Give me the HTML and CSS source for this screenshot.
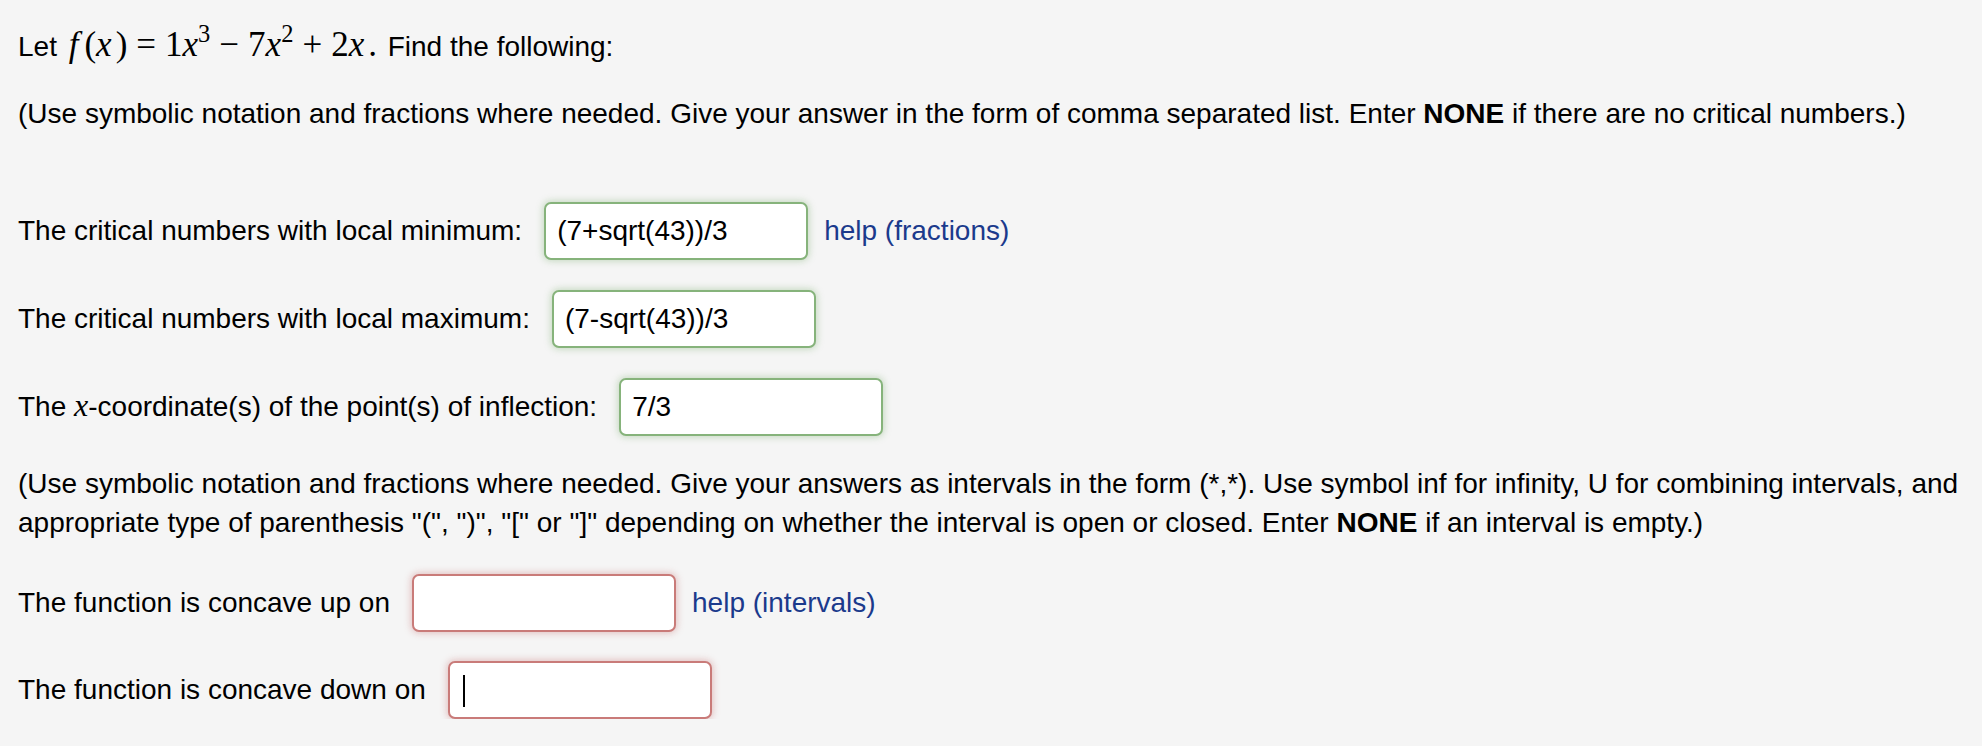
FILE: index.html
```html
<!DOCTYPE html>
<html lang="en">
<head>
    <meta charset="UTF-8">
    <title>Problem</title>
    <link rel="stylesheet" href="styles.css">
</head>
<body>
    <div class="problem">
        <p class="line">Let <span class="math"><i class="fn">f</i>(<i>x</i>)<span class="op">=</span>1<i>x</i><sup>3</sup><span class="op">&minus;</span>7<i>x</i><sup>2</sup><span class="op">+</span>2<i>x</i>.</span> Find the following:</p>
        <p class="line note">(Use symbolic notation and fractions where needed. Give your answer in the form of comma separated list. Enter <b>NONE</b> if there are no critical numbers.)</p>

        <div class="answers first">
            <div class="row">
                <span>The critical numbers with local minimum:</span>
                <input type="text" class="ans correct" value="(7+sqrt(43))/3">
                <a class="help" href="#">help (fractions)</a>
            </div>
            <div class="row">
                <span>The critical numbers with local maximum:</span>
                <input type="text" class="ans correct" value="(7-sqrt(43))/3">
            </div>
            <div class="row">
                <span>The <span class="mvar">x</span>-coordinate(s) of the point(s) of inflection:</span>
                <input type="text" class="ans correct" value="7/3">
            </div>
        </div>

        <p class="line note second">(Use symbolic notation and fractions where needed. Give your answers as intervals in the form (*,*). Use symbol inf for infinity, U for combining intervals, and<br>appropriate type of parenthesis "(", ")", "[" or "]" depending on whether the interval is open or closed. Enter <b>NONE</b> if an interval is empty.)</p>

        <div class="answers last">
            <div class="row">
                <span>The function is concave up on</span>
                <input type="text" class="ans wrong" value="">
                <a class="help" href="#">help (intervals)</a>
            </div>
            <div class="row">
                <span>The function is concave down on</span>
                <span class="field">
                    <input type="text" class="ans wrong" value="">
                    <span class="caret"></span>
                </span>
            </div>
        </div>
    </div>
</body>
</html>
```

FILE: styles.css
```css
body{
    margin:0px;
    padding:0px;
    background-color:#f5f5f5;
    color:#000;
    font-family: "Liberation Sans", Arial, sans-serif;
    font-size: 28px;
}
.problem{
    padding: 27px 0 0 18px;
    border-left: 3px solid #fafafa;
    margin-left: -3px;
}
.line{
    margin: 0;
    line-height: 39px;
}
.note{
    margin-top: 28px;
}
.note.second{
    margin-top: 28px;
    white-space: nowrap;
}
.math{
    font-family: "Liberation Serif", "Times New Roman", serif;
    font-size: 35px;
    line-height: 0;
    margin: 0 3px 0 4px;
}
.math i{
    padding-right: 4px;
}
.math .fn{
    padding-right: 6px;
}
.math sup{
    font-size: 70%;
    line-height: 0;
    vertical-align: 0.56em;
    margin-left: -4px;
}
.op{
    margin: 0 9px;
}
.mvar{
    font-family: "Liberation Serif", "Times New Roman", serif;
    font-style: italic;
    font-size: 32px;
    line-height: 0;
}
.answers{
    display: flex;
    flex-direction: column;
    gap: 30px;
}
.answers.first{
    margin-top: 69px;
}
.answers.last{
    margin-top: 32px;
    gap: 29px;
}
.row{
    display: flex;
    align-items: center;
    height: 58px;
}
.ans{
    box-sizing: border-box;
    width: 264px;
    height: 58px;
    margin-left: 22px;
    padding: 0 11px;
    font-family: "Liberation Sans", Arial, sans-serif;
    font-size: 28px;
    color: #000;
    background-color: #fff;
    border-radius: 7px;
    outline: none;
}
.correct{
    border: 2px solid #86b37b;
    box-shadow: 0 0 7px 1px rgba(134, 179, 123, 0.45);
}
.wrong{
    border: 2px solid #c97b79;
    box-shadow: 0 0 7px 1px rgba(201, 123, 121, 0.45);
}
.help{
    margin-left: 16px;
    color: #1b3a8c;
    text-decoration: none;
}
.field{
    position: relative;
    display: flex;
}
.caret{
    position: absolute;
    left: 37px;
    top: 14px;
    width: 2px;
    height: 32px;
    background-color: #000;
}
```
